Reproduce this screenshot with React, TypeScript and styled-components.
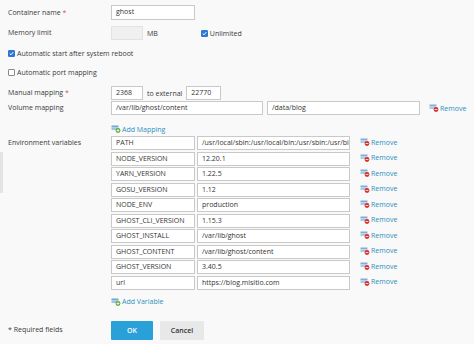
import React from 'react';
import styled, { createGlobalStyle } from 'styled-components';

const GlobalStyle = createGlobalStyle`
  body {
    margin: 0;
    background: #ffffff;
    font-family: 'Open Sans', 'Noto Sans', sans-serif;
    font-size: 7px;
    color: #333333;
  }
`;

const Page = styled.div`
  position: relative;
  width: 474px;
  height: 351px;
  background: #ffffff;
`;

const Panel = styled.form`
  height: 339px;
  padding: 5px 0 0 8px;
  background: #f9f9f9;
  box-sizing: content-box;
`;

const SideTab = styled.div`
  position: absolute;
  left: 0;
  top: 152px;
  width: 3px;
  height: 41px;
  background: #e4e4e4;
`;

interface RowProps {
  $mt?: number;
  $h?: number;
}

const Row = styled.div<RowProps>`
  display: flex;
  align-items: center;
  margin-top: ${({ $mt }) => `${$mt || 0}px`};
  height: ${({ $h }) => `${$h || 14}px`};
`;

const TopRow = styled(Row)`
  align-items: flex-start;
  height: auto;
`;

const Label = styled.div`
  width: 103px;
  flex: none;
  line-height: 14px;
  color: #3a3a3a;
`;

const Req = styled.span`
  color: #d9534f;
`;

interface InputProps {
  $w: number;
  $h?: number;
}

const Input = styled.div<InputProps>`
  box-sizing: border-box;
  width: ${({ $w }) => `${$w}px`};
  height: ${({ $h }) => `${$h || 14}px`};
  flex: none;
  padding: 0 4px;
  border: 1px solid #c9c9c9;
  background: #ffffff;
  line-height: 12px;
  white-space: nowrap;
  overflow: hidden;
  color: #333333;
`;

const DisabledInput = styled(Input)`
  background: #f0f0f0;
  border-color: #e3e3e3;
`;

const Unit = styled.span<{ $ml?: number }>`
  margin-left: ${({ $ml }) => `${$ml || 4}px`};
  margin-right: 4px;
  color: #3a3a3a;
`;

const CheckLabel = styled.label<{ $ml?: number }>`
  display: flex;
  align-items: center;
  gap: 2px;
  margin-left: ${({ $ml }) => `${$ml || 0}px`};
  color: #3a3a3a;
`;

const Box = styled.span<{ $on?: boolean }>`
  box-sizing: border-box;
  display: inline-flex;
  align-items: center;
  justify-content: center;
  width: 7px;
  height: 7px;
  border-radius: 1px;
  border: 1px solid ${({ $on }) => ($on ? '#2b77d4' : '#8a8a8a')};
  background: ${({ $on }) => ($on ? '#2b77d4' : '#ffffff')};
`;

const Check = ({ on }: { on?: boolean }) => (
  <Box $on={on}>
    {on && (
      <svg width="5" height="5" viewBox="0 0 10 10">
        <path d="M1.5 5.2 L4 7.6 L8.6 2.2" fill="none" stroke="#fff" strokeWidth="2" />
      </svg>
    )}
  </Box>
);

const Link = styled.a<{ $ml?: number }>`
  display: inline-flex;
  align-items: center;
  gap: 1px;
  margin-left: ${({ $ml }) => `${$ml || 0}px`};
  color: #2c8fc0;
  text-decoration: none;
  white-space: nowrap;
`;

const RemoveIcon = () => (
  <svg width="10" height="8" viewBox="0 0 10 8">
    <rect x="0.5" y="0.5" width="7" height="2" fill="#7fb0d6" />
    <rect x="0.5" y="3" width="7" height="2" fill="#a9cbe6" />
    <circle cx="7" cy="5.5" r="2.4" fill="#d8322d" />
    <rect x="5.6" y="5.1" width="2.8" height="0.8" fill="#fff" />
  </svg>
);

const AddIcon = () => (
  <svg width="10" height="8" viewBox="0 0 10 8">
    <rect x="0.5" y="0.5" width="7" height="2" fill="#6fa8d6" />
    <rect x="0.5" y="3" width="7" height="2" fill="#9ec4e4" />
    <circle cx="7" cy="5.5" r="2.4" fill="#5cae32" />
    <rect x="5.6" y="5.1" width="2.8" height="0.8" fill="#fff" />
    <rect x="6.6" y="4.1" width="0.8" height="2.8" fill="#fff" />
  </svg>
);

const EnvGrid = styled.div`
  display: grid;
  grid-template-columns: 84px 153px 60px;
  grid-auto-rows: 14px;
  column-gap: 2px;
  row-gap: 1.5px;
  align-items: center;
`;

const EnvRemove = styled.div`
  padding-left: 8px;
`;

const Button = styled.button<{ $primary?: boolean }>`
  height: 19px;
  padding: 0;
  border: none;
  border-radius: 1px;
  font-family: inherit;
  font-size: 7px;
  font-weight: 600;
  cursor: pointer;
  background: ${({ $primary }) => ($primary ? '#2aa0d9' : '#e8e8e8')};
  color: ${({ $primary }) => ($primary ? '#ffffff' : '#333333')};
  width: ${({ $primary }) => ($primary ? '42px' : '44px')};
  margin-right: 7px;
`;

const env: [string, string][] = [
  ['PATH', '/usr/local/sbin:/usr/local/bin:/usr/sbin:/usr/bin'],
  ['NODE_VERSION', '12.20.1'],
  ['YARN_VERSION', '1.22.5'],
  ['GOSU_VERSION', '1.12'],
  ['NODE_ENV', 'production'],
  ['GHOST_CLI_VERSION', '1.15.3'],
  ['GHOST_INSTALL', '/var/lib/ghost'],
  ['GHOST_CONTENT', '/var/lib/ghost/content'],
  ['GHOST_VERSION', '3.40.5'],
  ['url', 'https://blog.misitio.com'],
];

export default function App() {
  return (
    <Page>
      <GlobalStyle />
      <SideTab />
      <Panel>
        <Row $h={15}>
          <Label>
            Container name <Req>*</Req>
          </Label>
          <Input $w={84} $h={15}>ghost</Input>
        </Row>
        <Row $mt={6}>
          <Label>Memory limit</Label>
          <DisabledInput $w={32} />
          <Unit>MB</Unit>
          <CheckLabel $ml={39}>
            <Check on />
            Unlimited
          </CheckLabel>
        </Row>
        <Row $mt={7} $h={12}>
          <CheckLabel>
            <Check on />
            Automatic start after system reboot
          </CheckLabel>
        </Row>
        <Row $mt={7} $h={12}>
          <CheckLabel>
            <Check />
            Automatic port mapping
          </CheckLabel>
        </Row>
        <Row $mt={8}>
          <Label>
            Manual mapping <Req>*</Req>
          </Label>
          <Input $w={32}>2368</Input>
          <Unit $ml={4}>to external</Unit>
          <Input $w={35}>22770</Input>
        </Row>
        <Row $mt={1}>
          <Label>Volume mapping</Label>
          <Input $w={152}>/var/lib/ghost/content</Input>
          <Input $w={153} style={{ marginLeft: 4 }}>/data/blog</Input>
          <Link $ml={9} href="#">
            <RemoveIcon />
            Remove
          </Link>
        </Row>
        <Row $mt={8} $h={12}>
          <Label />
          <Link href="#">
            <AddIcon />
            Add Mapping
          </Link>
        </Row>
        <TopRow $mt={1}>
          <Label>Environment variables</Label>
          <EnvGrid>
            {env.map(([k, v]) => (
              <React.Fragment key={k}>
                <Input $w={84}>{k}</Input>
                <Input $w={153}>{v}</Input>
                <EnvRemove>
                  <Link href="#">
                    <RemoveIcon />
                    Remove
                  </Link>
                </EnvRemove>
              </React.Fragment>
            ))}
          </EnvGrid>
        </TopRow>
        <Row $mt={6} $h={12}>
          <Label />
          <Link href="#">
            <AddIcon />
            Add Variable
          </Link>
        </Row>
        <Row $mt={13} $h={19}>
          <Label>* Required fields</Label>
          <Button $primary type="button">OK</Button>
          <Button type="button">Cancel</Button>
        </Row>
      </Panel>
    </Page>
  );
}
